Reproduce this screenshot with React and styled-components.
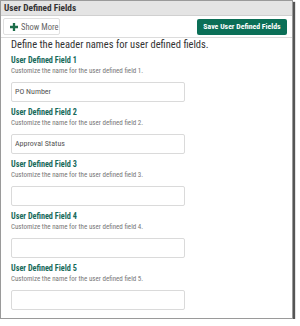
import React from 'react'
import styled, { createGlobalStyle } from 'styled-components'

const GlobalStyle = createGlobalStyle`
  body {
    margin: 0;
    background: #fff;
    font-family: "Roboto Condensed", Roboto, sans-serif;
    font-stretch: condensed;
  }
`

const Panel = styled.div`
  width: 291px;
  height: 317px;
  border: 1px solid #9a9a9a;
  box-shadow: 2px 2px 1px #555;
  background: #fff;
  overflow: hidden;
  display: flex;
  flex-direction: column;
`

const Header = styled.div`
  height: 14px;
  background: #e4e4e4;
  border-bottom: 1px solid #d0d0d0;
  padding: 0 3px;
  font-size: 9.3px;
  font-weight: bold;
  line-height: 14px;
  color: #333;
`

const Toolbar = styled.div`
  display: flex;
  justify-content: space-between;
  align-items: center;
  height: 21px;
  padding: 0 5px 0 2px;
  border-bottom: 1px solid #dcdcdc;
`

const GhostButton = styled.button`
  display: flex;
  align-items: center;
  gap: 3px;
  height: 17px;
  width: 57px;
  padding: 0 0 0 6px;
  background: #fff;
  border: 1px solid #e0e0e0;
  border-radius: 2px;
  font-family: inherit;
  font-stretch: inherit;
  font-size: 8.5px;
  color: #666;
`

const SaveButton = styled.button`
  height: 16px;
  width: 90px;
  padding: 0;
  background: #0b6f57;
  border: none;
  border-radius: 2px;
  font-family: inherit;
  font-stretch: inherit;
  font-size: 7.8px;
  font-weight: bold;
  color: #fff;
`

const Content = styled.div`
  padding: 0 10px;
`

const Intro = styled.div`
  font-size: 10.5px;
  line-height: 14px;
  color: #333;
  margin-bottom: 3px;
`

const Field = styled.div`
  display: flex;
  flex-direction: column;
  margin-bottom: 5px;
`

const Label = styled.div`
  font-size: 8.2px;
  font-weight: bold;
  line-height: 11px;
  color: #176a5a;
`

const Hint = styled.div`
  font-size: 7px;
  line-height: 10px;
  color: #777;
`

const Input = styled.div`
  margin-top: 6px;
  width: 174px;
  height: 20px;
  border: 1px solid #dadada;
  border-radius: 2px;
  padding: 0 3px;
  box-sizing: border-box;
  font-size: 8px;
  line-height: 18px;
  color: #555;
`

const Plus = () => (
  <svg width="8" height="8" viewBox="0 0 9 9">
    <path d="M3.2 0h2.6v3.2H9v2.6H5.8V9H3.2V5.8H0V3.2h3.2z" fill="#1d6e4a" />
  </svg>
)

const fields = [
  { n: 1, value: 'PO Number' },
  { n: 2, value: 'Approval Status' },
  { n: 3, value: '' },
  { n: 4, value: '' },
  { n: 5, value: '' },
]

export default function App() {
  return (
    <>
      <GlobalStyle />
      <Panel>
        <Header>User Defined Fields</Header>
        <Toolbar>
          <GhostButton>
            <Plus />
            Show More
          </GhostButton>
          <SaveButton>Save User Defined Fields</SaveButton>
        </Toolbar>
        <Content>
          <Intro>Define the header names for user defined fields.</Intro>
          {fields.map(f => (
            <Field key={f.n}>
              <Label>User Defined Field {f.n}</Label>
              <Hint>Customize the name for the user defined field {f.n}.</Hint>
              <Input>{f.value}</Input>
            </Field>
          ))}
        </Content>
      </Panel>
    </>
  )
}
